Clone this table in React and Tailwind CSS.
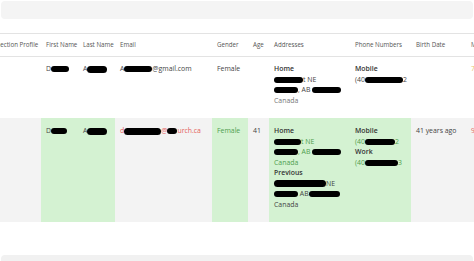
const cols = "grid grid-cols-[61px_37px_37px_97px_36px_21px_81px_61px_55px_60px]";

function Blot({ w, h = 6 }) {
  return (
    <span
      className="inline-block bg-black rounded-full align-middle"
      style={{ width: w, height: h }}
    />
  );
}

function Cell({ children, green, className = "" }) {
  return (
    <div className={`px-[5px] whitespace-nowrap overflow-hidden ${green ? "bg-[#d4f2d2]" : ""} ${className}`}>
      {children}
    </div>
  );
}

export default function App() {
  const head = ["Connection Profile", "First Name", "Last Name", "Email", "Gender", "Age", "Addresses", "Phone Numbers", "Birth Date", "Modified"];

  return (
    <div className="w-[474px] h-[261px] bg-white overflow-hidden font-['Open_Sans',sans-serif] text-[#444]">
      <div className="mx-[1px] mt-[1px] h-[18px] rounded-sm bg-[#f4f4f4]" />

      <div className="mt-[14px] overflow-hidden">
        <div className="-ml-[20px] w-[540px]">
          {/* header */}
          <div className={`${cols} h-[24px] items-center border-t border-b border-[#e3e3e3] text-[6.2px] text-[#555]`}>
            {head.map((h) => (
              <Cell key={h}>{h}</Cell>
            ))}
          </div>

          {/* row 1 */}
          <div className={`${cols} text-[6.9px] leading-[10.5px] h-[61px]`}>
            <Cell className="pt-[7px]" />
            <Cell className="pt-[7px]">D<Blot w={18} /></Cell>
            <Cell className="pt-[7px]">A<Blot w={20} h={7} /></Cell>
            <Cell className="pt-[7px]">A<Blot w={28} />@gmail.com</Cell>
            <Cell className="pt-[7px]">Female</Cell>
            <Cell className="pt-[7px]" />
            <Cell className="pt-[7px]">
              <div className="font-semibold text-[#333]">Home</div>
              <div><Blot w={29} />t NE</div>
              <div><Blot w={24} />, AB <Blot w={29} /></div>
              <div className="text-[#777]">Canada</div>
            </Cell>
            <Cell className="pt-[7px]">
              <div className="font-semibold text-[#333]">Mobile</div>
              <div>(40<Blot w={38} />2</div>
            </Cell>
            <Cell className="pt-[7px]" />
            <Cell className="pt-[7px] text-[#e8c66a]">7</Cell>
          </div>

          {/* row 2 */}
          <div className={`${cols} bg-[#f3f3f3] text-[6.9px] leading-[10.5px] h-[104px]`}>
            <Cell className="pt-[8px]" />
            <Cell green className="pt-[8px]">D<Blot w={16} /></Cell>
            <Cell green className="pt-[8px]">A<Blot w={20} h={7} /></Cell>
            <Cell className="pt-[8px] text-[#e4625c]">d<Blot w={37} h={7} />@<Blot w={10} />urch.ca</Cell>
            <Cell green className="pt-[8px] text-[#4e9e4e]">Female</Cell>
            <Cell className="pt-[8px]">41</Cell>
            <Cell green className="pt-[8px]">
              <div className="font-semibold text-[#333]">Home</div>
              <div className="text-[#4e9e4e]"><Blot w={27} />t NE</div>
              <div className="text-[#4e9e4e]"><Blot w={24} />, AB <Blot w={29} /></div>
              <div className="text-[#4e9e4e]">Canada</div>
              <div className="font-semibold text-[#333]">Previous</div>
              <div><Blot w={52} h={7} />NE</div>
              <div><Blot w={24} /> AB<Blot w={31} /></div>
              <div>Canada</div>
            </Cell>
            <Cell green className="pt-[8px]">
              <div className="font-semibold text-[#333]">Mobile</div>
              <div className="text-[#4e9e4e]">(40<Blot w={30} />2</div>
              <div className="font-semibold text-[#333]">Work</div>
              <div className="text-[#4e9e4e]">(40<Blot w={33} />3</div>
            </Cell>
            <Cell className="pt-[8px]">41 years ago</Cell>
            <Cell className="pt-[8px] text-[#e4625c]">9</Cell>
          </div>
        </div>
      </div>

      <div className="mx-[1px] mt-[33px] h-[10px] rounded-sm bg-[#f1f1f1]" />
    </div>
  );
}
